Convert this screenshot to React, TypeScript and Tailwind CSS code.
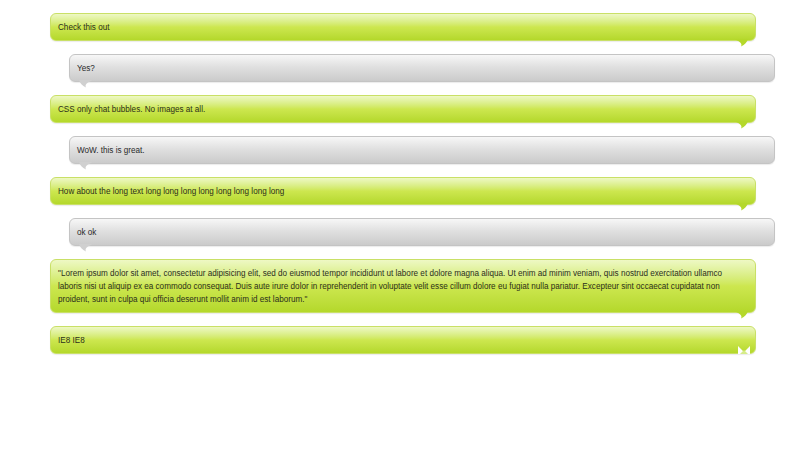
const messages: { text: string; me: boolean; ie?: boolean }[] = [
  { text: "Check this out", me: true },
  { text: "Yes?", me: false },
  { text: "CSS only chat bubbles. No images at all.", me: true },
  { text: "WoW. this is great.", me: false },
  { text: "How about the long text long long long long long long long long", me: true },
  { text: "ok ok", me: false },
  {
    text: "\"Lorem ipsum dolor sit amet, consectetur adipisicing elit, sed do eiusmod tempor incididunt ut labore et dolore magna aliqua. Ut enim ad minim veniam, quis nostrud exercitation ullamco laboris nisi ut aliquip ex ea commodo consequat. Duis aute irure dolor in reprehenderit in voluptate velit esse cillum dolore eu fugiat nulla pariatur. Excepteur sint occaecat cupidatat non proident, sunt in culpa qui officia deserunt mollit anim id est laborum.\"",
    me: true,
  },
  { text: "IE8 IE8", me: true, ie: true },
];

function Bubble({ text, me, ie }: { text: string; me: boolean; ie?: boolean }) {
  if (me) {
    return (
      <div className="relative ml-[50px] mr-[44px] rounded-[6px] border border-[#c9e066] bg-gradient-to-b from-[#eef8c4] via-[#cde74f] to-[#b4d82a] pl-[7px] pr-[18px] pt-[7px] pb-[6px] text-[8.15px] leading-[13px] text-[#2b2f1c] shadow-[0_1px_1px_rgba(0,0,0,0.08)]">
        {text}
        {ie ? (
          <svg className="absolute bottom-[-1px] right-[5px]" width="12" height="8" viewBox="0 0 12 8">
            <path d="M0 0 L6 6 L12 0 L12 8 L0 8 Z" fill="#ffffff" />
            <path d="M2 8 L6 4 L10 8 Z" fill="#d6ec8a" />
          </svg>
        ) : (
          <svg className="absolute bottom-[-7px] right-[7px]" width="13" height="8" viewBox="0 0 13 8">
            <path d="M0 0 L13 0 C12 3 10 6 6 7.5 C7 6 6.5 4 4 2.5 C2 1.5 1 1 0 0 Z" fill="#b4d82a" />
          </svg>
        )}
      </div>
    );
  }
  return (
    <div className="relative ml-[69px] mr-[25px] rounded-[6px] border border-[#c4c4c4] bg-gradient-to-b from-[#f7f7f7] via-[#dedede] to-[#cbcbcb] pl-[7px] pr-[18px] pt-[7px] pb-[6px] text-[8.15px] leading-[13px] text-[#2a2a2a] shadow-[0_1px_1px_rgba(0,0,0,0.08)]">
      {text}
      <svg className="absolute bottom-[-7px] left-[9px]" width="13" height="8" viewBox="0 0 13 8">
        <path d="M13 0 L0 0 C1 3 3 6 7 7.5 C6 6 6.5 4 9 2.5 C11 1.5 12 1 13 0 Z" fill="#d0d0d0" />
      </svg>
    </div>
  );
}

export default function App() {
  return (
    <div className="h-[450px] w-[800px] bg-white pt-[13px]" style={{ fontFamily: '"Liberation Sans", Arial, sans-serif' }}>
      <div className="flex flex-col gap-[13px]">
        {messages.map((m, i) => (
          <Bubble key={i} {...m} />
        ))}
      </div>
    </div>
  );
}
